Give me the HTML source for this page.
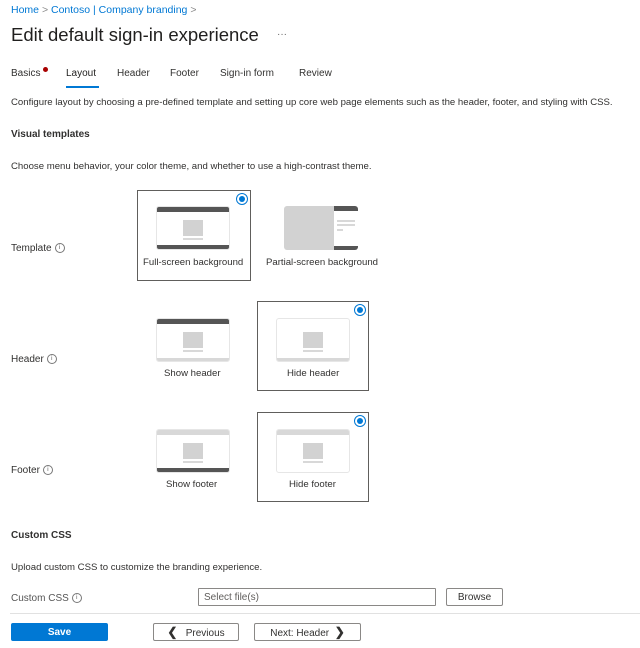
<!DOCTYPE html>
<html><head><style>
body{margin:0;width:640px;height:648px;background:#fff;font-family:"Liberation Sans",sans-serif;color:#323130;position:relative;overflow:hidden}
.a{position:absolute;white-space:nowrap;font-size:10px;line-height:12px}
.card{position:absolute;width:74px;height:44px;border:1px solid #e6e6e6;border-radius:3px;background:#fff;box-sizing:border-box;overflow:hidden}
.hd{position:absolute;left:0;right:0;top:0;height:5px;background:#555}
.ft{position:absolute;left:0;right:0;bottom:0;height:4px;background:#555}
.lg{background:#d8d8d8!important}
.sq{position:absolute;left:26px;top:13px;width:20px;height:16px;background:#d2d2d2}
.ln{position:absolute;left:26px;top:31px;width:20px;height:2px;background:#d8d8d8}
.box{position:absolute;border:1px solid #605e5c;width:112px;height:90px;box-sizing:border-box}
.rad{position:absolute;right:2px;top:2px;width:12px;height:12px;border:1px solid #0078d4;border-radius:50%;box-sizing:border-box}
.rad::after{content:"";position:absolute;left:2px;top:2px;width:6px;height:6px;border-radius:50%;background:#0078d4}
.info{display:inline-block;width:8px;height:8px;border:1px solid #777;border-radius:50%;font-size:6px;line-height:8px;text-align:center;vertical-align:middle;margin-left:3px;color:#555}
.btn{position:absolute;border:1px solid #8a8886;box-sizing:border-box;font-size:10px;text-align:center;line-height:17px;height:18px;border-radius:2px}
.lb{font-size:9.6px}
</style></head><body>
<div class="a" style="left:11px;top:4px;font-size:10.5px;color:#0078d4">Home <span style="color:#888">&gt;</span> Contoso | Company branding <span style="color:#888">&gt;</span></div>
<div class="a" style="left:11px;top:24px;font-size:18.5px;line-height:22px;color:#201f1e">Edit default sign-in experience</div>
<div class="a" style="left:277px;top:29px;color:#666">···</div>
<div class="a" style="left:11px;top:68px">Basics</div>
<div style="position:absolute;left:43px;top:67px;width:5px;height:5px;border-radius:50%;background:#a80000"></div>
<div class="a" style="left:66px;top:68px;color:#201f1e">Layout</div>
<div style="position:absolute;left:66px;top:86px;width:33px;height:2px;background:#0078d4"></div>
<div class="a" style="left:117px;top:68px">Header</div>
<div class="a" style="left:170px;top:68px">Footer</div>
<div class="a" style="left:220px;top:68px">Sign-in form</div>
<div class="a" style="left:299px;top:68px">Review</div>
<div class="a" style="left:11px;top:97px;font-size:9.6px">Configure layout by choosing a pre-defined template and setting up core web page elements such as the header, footer, and styling with CSS.</div>
<div class="a" style="left:11px;top:129px;font-weight:bold">Visual templates</div>
<div class="a" style="left:11px;top:161px;font-size:9.6px">Choose menu behavior, your color theme, and whether to use a high-contrast theme.</div>

<div class="a" style="left:11px;top:243px">Template<span class="info">i</span></div>
<div class="box" style="left:137px;top:190px;height:91px;width:114px"><div class="rad"></div></div>
<div class="card" style="left:156px;top:206px"><div class="hd"></div><div class="sq"></div><div class="ln"></div><div class="ft"></div></div>
<div class="a lb" style="left:143px;top:257px">Full-screen background</div>
<div class="card" style="left:284px;top:206px;border:none"><div style="position:absolute;left:0;top:0;width:50px;height:44px;background:#d2d2d2"></div><div style="position:absolute;left:50px;right:0;top:0;height:5px;background:#555"></div><div style="position:absolute;left:50px;right:0;bottom:0;height:4px;background:#555"></div><div style="position:absolute;left:53px;top:14px;width:18px;height:2px;background:#d8d8d8"></div><div style="position:absolute;left:53px;top:18px;width:18px;height:2px;background:#d8d8d8"></div><div style="position:absolute;left:53px;top:23px;width:6px;height:2px;background:#d8d8d8"></div></div>
<div class="a lb" style="left:266px;top:257px">Partial-screen background</div>

<div class="a" style="left:11px;top:354px">Header<span class="info">i</span></div>
<div class="card" style="left:156px;top:318px"><div class="hd"></div><div class="sq"></div><div class="ln"></div><div class="ft lg" style="height:3px"></div></div>
<div class="a lb" style="left:164px;top:368px">Show header</div>
<div class="box" style="left:257px;top:301px"><div class="rad"></div></div>
<div class="card" style="left:276px;top:318px"><div class="sq"></div><div class="ln"></div><div class="ft lg" style="height:3px"></div></div>
<div class="a lb" style="left:287px;top:368px">Hide header</div>

<div class="a" style="left:11px;top:465px">Footer<span class="info">i</span></div>
<div class="card" style="left:156px;top:429px"><div class="hd lg"></div><div class="sq"></div><div class="ln"></div><div class="ft"></div></div>
<div class="a lb" style="left:166px;top:479px">Show footer</div>
<div class="box" style="left:257px;top:412px"><div class="rad"></div></div>
<div class="card" style="left:276px;top:429px"><div class="hd lg"></div><div class="sq"></div><div class="ln"></div></div>
<div class="a lb" style="left:289px;top:479px">Hide footer</div>

<div class="a" style="left:11px;top:530px;font-weight:bold">Custom CSS</div>
<div class="a" style="left:11px;top:562px;font-size:9.6px">Upload custom CSS to customize the branding experience.</div>
<div class="a" style="left:11px;top:593px;color:#555">Custom CSS<span class="info">i</span></div>
<div class="btn" style="left:198px;top:588px;width:238px;text-align:left;padding-left:5px;color:#605e5c;border-radius:1px">Select file(s)</div>
<div class="btn" style="left:446px;top:588px;width:57px">Browse</div>
<div style="position:absolute;left:10px;right:0;top:613px;height:1px;background:#e1e1e1"></div>
<div class="btn" style="left:11px;top:623px;width:97px;background:#0078d4;border-color:#0078d4;color:#fff;font-weight:bold">Save</div>
<div class="btn" style="left:153px;top:623px;width:86px"><b style="font-size:12px">&#10094;</b>&nbsp;&nbsp; Previous</div>
<div class="btn" style="left:254px;top:623px;width:107px">Next: Header &nbsp;<b style="font-size:12px">&#10095;</b></div>
</body></html>
